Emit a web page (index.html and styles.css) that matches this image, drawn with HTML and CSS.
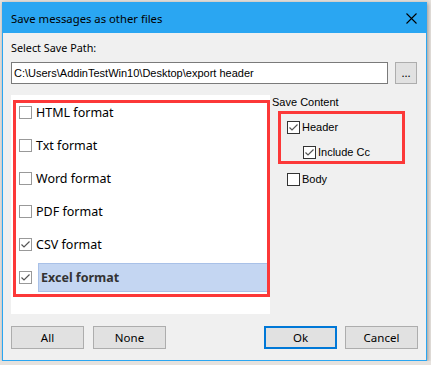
FILE: index.html
```html
<!DOCTYPE html>
<html lang="en">
<head>
    <meta charset="UTF-8">
    <title>Save messages as other files</title>
    <link rel="stylesheet" href="styles.css">
</head>
<body>
    <div class="window">
        <div class="titlebar">
            <span class="title">Save messages as other files</span>
            <svg class="close" width="11" height="11" viewBox="0 0 11 11">
                <path d="M0.5 0.5 L10.5 10.5 M10.5 0.5 L0.5 10.5" stroke="#000" stroke-width="1.1" fill="none"/>
            </svg>
        </div>
        <div class="content">
            <div class="path-label">Select Save Path:</div>
            <div class="path-row">
                <div class="path-input">C:\Users\AddinTestWin10\Desktop\export header</div>
                <button class="btn browse">...</button>
            </div>
            <div class="main">
                <div class="format-list">
                    <div class="format-item"><span class="check"></span>HTML format</div>
                    <div class="format-item"><span class="check"></span>Txt format</div>
                    <div class="format-item"><span class="check"></span>Word format</div>
                    <div class="format-item"><span class="check"></span>PDF format</div>
                    <div class="format-item"><span class="check"><svg width="11" height="11" viewBox="0 0 11 11"><polyline points="1.5,5.5 4,8 9.5,2.5" stroke="#555" stroke-width="1.2" fill="none"/></svg></span>CSV format</div>
                    <div class="format-item selected"><span class="check"><svg width="11" height="11" viewBox="0 0 11 11"><polyline points="1.5,5.5 4,8 9.5,2.5" stroke="#555" stroke-width="1.2" fill="none"/></svg></span><span class="item-text">Excel format</span></div>
                    <div class="mark list-mark"></div>
                </div>
                <div class="save-content">
                    <div class="group-title">Save Content</div>
                    <div class="opt"><span class="box"><svg width="11" height="11" viewBox="0 0 11 11"><polyline points="1.5,5.5 4,8 9.5,2.5" stroke="#555" stroke-width="1.2" fill="none"/></svg></span>Header</div>
                    <div class="opt sub"><span class="box"><svg width="11" height="11" viewBox="0 0 11 11"><polyline points="1.5,5.5 4,8 9.5,2.5" stroke="#555" stroke-width="1.2" fill="none"/></svg></span>Include Cc</div>
                    <div class="opt body-opt"><span class="box"></span>Body</div>
                    <div class="mark content-mark"></div>
                </div>
            </div>
            <div class="buttons">
                <button class="btn">All</button>
                <button class="btn">None</button>
                <span class="spacer"></span>
                <button class="btn default">Ok</button>
                <button class="btn">Cancel</button>
            </div>
        </div>
    </div>
</body>
</html>
```

FILE: styles.css
```css
body {
    margin: 0;
    background-color: #e6e2de;
    font-family: "Noto Sans", sans-serif;
    color: #000;
}
.window {
    margin: 2px 0 0 2px;
    width: 425px;
    height: 359px;
    box-sizing: border-box;
    border: 1px solid #2aa6f2;
    background-color: #f0f0f0;
    box-shadow: 1px 1px 4px rgba(0, 0, 0, 0.35);
}
.titlebar {
    height: 30px;
    background-color: #2aa6f2;
    display: flex;
    align-items: center;
    justify-content: space-between;
    padding: 0 9px 0 8px;
}
.title {
    font-size: 11.3px;
    color: #000;
}
.close {
    margin-top: 1px;
}
.content {
    padding: 7px 8px 0 8px;
}
.path-label {
    font-size: 10.8px;
    line-height: 16px;
}
.path-row {
    display: flex;
    gap: 7px;
    margin-top: 6px;
    height: 22px;
}
.path-input {
    width: 377px;
    box-sizing: border-box;
    border: 1px solid #7a7a7a;
    background-color: white;
    font-family: "Liberation Sans", Arial, sans-serif;
    font-size: 11px;
    line-height: 20px;
    padding-left: 2px;
}
.btn {
    background-color: #e1e1e1;
    border: 1px solid #adadad;
    font-family: "Noto Sans", sans-serif;
    font-size: 11.5px;
    color: #000;
    padding: 0;
    margin: 0;
}
.browse {
    width: 22px;
    height: 22px;
    line-height: 12px;
}
.main {
    display: flex;
    margin-top: 11px;
    height: 219px;
}
.format-list {
    position: relative;
    width: 259px;
    background-color: white;
    padding-top: 1px;
    box-sizing: border-box;
}
.format-item {
    display: flex;
    align-items: center;
    height: 33px;
    padding-left: 8px;
    font-size: 12.5px;
}
.check {
    width: 13px;
    height: 13px;
    box-sizing: border-box;
    border: 1px solid #999;
    background-color: white;
    margin-right: 4px;
    display: flex;
    align-items: center;
    justify-content: center;
}
.format-item.selected .check {
    margin-right: 6px;
}
.item-text {
    flex: 1;
    height: 29px;
    box-sizing: border-box;
    background-color: #c4d6f2;
    border-top: 1px solid #a9c1e8;
    border-bottom: 1px solid #a9c1e8;
    border-left: 1px solid #a9c1e8;
    display: flex;
    align-items: center;
    padding-left: 2px;
    font-weight: bold;
    color: #333;
}
.mark {
    position: absolute;
    box-sizing: border-box;
    border: 3px solid #fc3838;
}
.list-mark {
    left: 2px;
    top: 5px;
    width: 257px;
    height: 197px;
}
.save-content {
    position: relative;
    margin-left: 2px;
    flex: 1;
    font-family: "Liberation Sans", Arial, sans-serif;
    font-size: 11px;
}
.group-title {
    line-height: 14px;
}
.opt {
    display: flex;
    align-items: center;
    height: 14px;
    margin-top: 11px;
    padding-left: 15px;
}
.opt.sub {
    padding-left: 31px;
}
.opt.body-opt {
    margin-top: 13px;
}
.box {
    width: 13px;
    height: 13px;
    box-sizing: border-box;
    border: 1px solid #333;
    background-color: white;
    margin-right: 2px;
    display: flex;
    align-items: center;
    justify-content: center;
}
.content-mark {
    left: 6px;
    top: 16px;
    width: 127px;
    height: 53px;
}
.buttons {
    display: flex;
    margin-top: 12px;
    gap: 9px;
}
.buttons .btn {
    width: 73px;
    height: 23px;
}
.spacer {
    flex: 1;
}
.buttons .btn.default {
    border: 2px solid #0078d7;
    margin-right: -1px;
}
```
